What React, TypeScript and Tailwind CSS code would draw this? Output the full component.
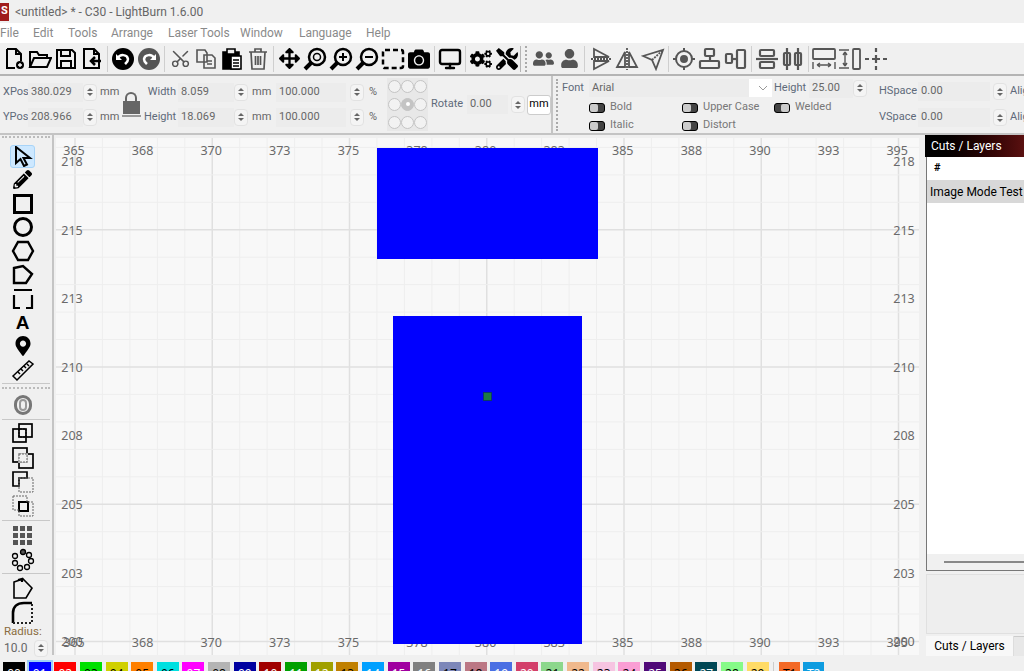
import { ReactNode } from 'react'
import { FaArrowsAlt, FaCamera, FaCogs, FaTools, FaUser, FaUserFriends, FaPencilAlt, FaMapMarkerAlt } from 'react-icons/fa'
import { Scissors, Monitor } from 'lucide-react'

const S = ({ children, size = 24, className = '' }: { children: ReactNode; size?: number; className?: string }) => (
  <svg width={size} height={size} viewBox="0 0 24 24" fill="none" stroke="currentColor" strokeWidth="2" className={className}>
    {children}
  </svg>
)

const Cell = ({ children, dim }: { children: ReactNode; dim?: boolean }) => (
  <div className={`flex h-[26px] w-[26px] flex-shrink-0 items-center justify-center ${dim ? 'text-[#555]' : 'text-black'}`}>
    {children}
  </div>
)

const Sep = () => (
  <div className="flex h-[26px] w-[5px] flex-shrink-0 justify-center">
    <div className="w-px bg-[#cfcfcf]" />
  </div>
)

const Spin = () => (
  <div className="flex h-[17px] w-[14px] flex-shrink-0 flex-col items-center justify-center gap-[2px] rounded-sm border border-[#e2e2e2] bg-[#f4f4f4]">
    <div className="h-0 w-0 border-x-[3px] border-b-[3px] border-x-transparent border-b-[#666]" />
    <div className="h-0 w-0 border-x-[3px] border-t-[3px] border-x-transparent border-t-[#666]" />
  </div>
)

const Field = ({ w, value, pad = 'pl-[3px]' }: { w: string; value: string; pad?: string }) => (
  <div className={`flex h-[19px] flex-shrink-0 items-center bg-[#ececec] text-[11px] tracking-[0.1px] text-[#666] ${w} ${pad}`}>{value}</div>
)

const Toggle = ({ on }: { on?: boolean }) => (
  <div className="flex h-[10px] w-[16px] flex-shrink-0 rounded-[3px] border border-black bg-[#444]">
    <div className={`h-full w-[8px] rounded-[2px] bg-[#ccc] ${on ? 'ml-auto' : ''}`} />
  </div>
)

const Dots = ({ h }: { h: string }) => (
  <div className={`w-0 flex-shrink-0 border-l-2 border-dotted border-[#aaa] ${h}`} />
)

const HDots = () => <div className="mx-[2px] h-0 flex-shrink-0 border-t-2 border-dotted border-[#bbb]" />

const HRule = () => <div className="mx-[2px] h-px flex-shrink-0 bg-[#c8c8c8]" />

const Side = ({ children }: { children: ReactNode }) => (
  <div className="flex h-[24px] flex-shrink-0 items-center justify-center text-black">{children}</div>
)

const Tool = ({ children }: { children: ReactNode }) => (
  <div className="flex h-[23.75px] flex-shrink-0 items-center justify-center text-black">{children}</div>
)

const colors = [
  ['00', '#000000', '#fff'], ['01', '#0000ff', '#fff'], ['02', '#ff0000', '#fff'], ['03', '#00e000', '#000'],
  ['04', '#d0d000', '#000'], ['05', '#ff8000', '#000'], ['06', '#00e0e0', '#000'], ['07', '#ff00ff', '#fff'],
  ['08', '#b4b4b4', '#000'], ['09', '#0000a0', '#fff'], ['10', '#a00000', '#fff'], ['11', '#00a000', '#fff'],
  ['12', '#a0a000', '#fff'], ['13', '#c08000', '#000'], ['14', '#00a0ff', '#fff'], ['15', '#a000a0', '#fff'],
  ['16', '#808080', '#fff'], ['17', '#7d87b9', '#000'], ['18', '#bb7784', '#000'], ['19', '#4a6fe3', '#fff'],
  ['20', '#d33f6a', '#fff'], ['21', '#8cd78c', '#000'], ['22', '#f0b98d', '#000'], ['23', '#f6c4e1', '#000'],
  ['24', '#fa9ed4', '#000'], ['25', '#500a78', '#fff'], ['26', '#b45a00', '#000'], ['27', '#004754', '#fff'],
  ['28', '#86fa88', '#000'], ['29', '#ffdb66', '#000'],
]

const xLabels = [365, 368, 370, 373, 375, 378, 380, 383, 385, 388, 390, 393, 395]
const yLabels = [218, 215, 213, 210, 208, 205, 203, 200]

function Canvas() {
  // canvas box starts at 56,138 on the page
  const vMinor = Array.from({ length: 32 }, (_, i) => 75 - 56 + i * 27.45)
  const hMinor = Array.from({ length: 20 }, (_, i) => 367 - 138 - 9 * 27.45 + i * 27.45)
  return (
    <div className="relative h-[517px] w-[863px] flex-shrink-0 overflow-hidden bg-[#f8f8f8] font-['Noto_Sans',sans-serif] text-[12.5px] text-[#6a6a6a]">
      <svg width="863" height="517" className="absolute left-0 top-0">
        {vMinor.map((x, i) => (
          <line key={i} x1={x} x2={x} y1="0" y2="517" stroke={i % 5 === 0 ? '#e0e0e0' : '#eeeeee'} strokeWidth={i % 5 === 0 ? 1.5 : 1} />
        ))}
        {hMinor.map((y, i) => (
          <line key={i} y1={y} y2={y} x1="0" x2="863" stroke={(i + 1) % 5 === 0 ? '#e0e0e0' : '#eeeeee'} strokeWidth={(i + 1) % 5 === 0 ? 1.5 : 1} />
        ))}
      </svg>
      {xLabels.map((n, i) => (
        <span key={n} className="absolute top-[4px] w-8 text-center" style={{ left: 2 + i * 68.6 }}>{n}</span>
      ))}
      {xLabels.map((n, i) => (
        <span key={n} className="absolute top-[496px] w-8 text-center" style={{ left: 2 + i * 68.6 }}>{n}</span>
      ))}
      {yLabels.map((n, i) => (
        <span key={n} className="absolute w-8 text-center" style={{ left: 0, top: 15 + i * 68.6 }}>{n}</span>
      ))}
      {yLabels.map((n, i) => (
        <span key={n} className="absolute w-8 text-center" style={{ left: 832, top: 15 + i * 68.6 }}>{n}</span>
      ))}
      <div className="absolute left-[321px] top-[10px] h-[111px] w-[221px] bg-[#0000ff]" />
      <div className="absolute left-[337px] top-[178px] h-[328px] w-[189px] bg-[#0000ff]" />
      <div className="absolute left-[427px] top-[254px] h-[9px] w-[9px] border border-[#0a3a6a] bg-[#1d7a45]" />
    </div>
  )
}

export default function App() {
  return (
    <div className="flex h-[671px] w-[1024px] flex-col overflow-hidden bg-[#f0f0f0] font-['Roboto','Noto_Sans',sans-serif] text-[11px]">
      {/* title */}
      <div className="flex h-[23px] flex-shrink-0 items-center text-[12px] text-[#666]">
        <div className="mr-[6px] flex h-[18px] w-[9px] items-center justify-center bg-[#a01c1c] text-[11px] font-bold text-white">S</div>
        <span>&lt;untitled&gt; * - C30 - LightBurn 1.6.00</span>
      </div>
      {/* menu */}
      <div className="flex h-[20px] flex-shrink-0 items-center bg-white text-[12px] text-[#8a8a8a]">
        <span className="w-[33px]">File</span>
        <span className="w-[35px]">Edit</span>
        <span className="w-[43px]">Tools</span>
        <span className="w-[57px]">Arrange</span>
        <span className="w-[72px]">Laser Tools</span>
        <span className="w-[59px]">Window</span>
        <span className="w-[67px]">Language</span>
        <span>Help</span>
      </div>
      {/* toolbar */}
      <div className="flex h-[33px] flex-shrink-0 items-center border-b-2 border-[#b4b4b4] pl-px">
        <Cell><S><path d="M5 2h9l5 5v7M5 2v19h8M14 2v5h5" /><circle cx="18" cy="18" r="4" fill="#000" stroke="none" /><path d="M16 18h4M18 16v4" stroke="#fff" strokeWidth="1.3" /></S></Cell>
        <Cell><S><path d="M2 20V5h7l2 3h8v3" /><path d="M2 20l4-9h17l-4 9z" /></S></Cell>
        <Cell><S><path d="M3 3h15l3 3v15H3z" /><path d="M7 3v6h9V3M7 21v-7h10v7" /></S></Cell>
        <Cell><S><path d="M4 2h10l5 5v14H4zM14 2v5h5" /><path d="M21 14h-9M15 10l-4 4 4 4" strokeWidth="2.5" /></S></Cell>
        <Sep />
        <Cell><S><circle cx="12" cy="12" r="11" fill="#000" stroke="none" /><path d="M7 11c2-4 9-4 10 1 0 3-2 4-3 5" stroke="#fff" strokeWidth="2.5" /><path d="M5 7v6h6z" fill="#fff" stroke="none" /></S></Cell>
        <Cell dim><S><circle cx="12" cy="12" r="11" fill="#555" stroke="none" /><path d="M17 11c-2-4-9-4-10 1 0 3 2 4 3 5" stroke="#fff" strokeWidth="2.5" /><path d="M19 7v6h-6z" fill="#fff" stroke="none" /></S></Cell>
        <Sep />
        <Cell dim><Scissors size={21} strokeWidth={1.7} className="-rotate-90" /></Cell>
        <Cell dim><S className="[stroke-width:1.6]"><path d="M3 3h8l2 3v9H3zM10 8h8l3 3v10H10z" fill="#f0f0f0" /><path d="M13 14h5M13 17h5" /></S></Cell>
        <Cell><S className="[stroke-width:1.6]"><path d="M3 5h16v17H3z" fill="#000" /><path d="M7 2h8v5H7z" fill="#f0f0f0" /><path d="M11 9h10v13H11z" fill="#fff" /><path d="M13 13h6M13 16h6M13 19h6" /></S></Cell>
        <Cell dim><S className="[stroke-width:1.7]"><path d="M3 5h18M9 5V2h6v3M5 5l1 17h12l1-17M9.5 9v9M12 9v9M14.500 9v9" /></S></Cell>
        <Sep />
        <Cell><FaArrowsAlt size={21} /></Cell>
        <Cell><S><circle cx="14" cy="10" r="8" strokeWidth="2.5" /><path d="M8 16l-6 6" strokeWidth="4" /><circle cx="14" cy="10" r="3.500" strokeWidth="1.500" /></S></Cell>
        <Cell><S><circle cx="14" cy="10" r="8" strokeWidth="2.5" /><path d="M8 16l-6 6" strokeWidth="4" /><path d="M10 10h8M14 6v8" /></S></Cell>
        <Cell><S><circle cx="14" cy="10" r="8" strokeWidth="2.5" /><path d="M8 16l-6 6" strokeWidth="4" /><path d="M10 10h8" /></S></Cell>
        <Cell><S><rect x="2" y="3" width="20" height="18" rx="2" strokeWidth="2.5" strokeDasharray="5 3" /></S></Cell>
        <Cell><FaCamera size={22} /></Cell>
        <Sep />
        <Cell><Monitor size={24} strokeWidth={2.4} /></Cell>
        <Sep />
        <Cell><FaCogs size={22} /></Cell>
        <Cell><FaTools size={22} /></Cell>
        <div className="flex h-[26px] w-[10px] flex-shrink-0">
          <div className="w-px bg-[#b4b4b4]" />
          <div className="ml-1"><Dots h="h-[26px]" /></div>
        </div>
        <Cell dim><FaUserFriends size={21} /></Cell>
        <Cell dim><FaUser size={19} /></Cell>
        <Sep />
        <div className="w-px" />
        <Cell dim><S className="[stroke-width:1.8]"><path d="M5 2l15 8H5zM5 14h15L5 22z" /><path d="M2 12h20" strokeDasharray="2 1" /></S></Cell>
        <Cell dim><S className="[stroke-width:1.8]"><path d="M10 5v15H2zM14 5v15h8z" /><path d="M12 1v22" strokeDasharray="2 1" /></S></Cell>
        <Cell dim><S className="[stroke-width:1.8]"><path d="M2 9l20-6-7 19-4-9z" /><path d="M11 13L22 3" strokeDasharray="2 1" /></S></Cell>
        <Sep />
        <Cell dim><S><circle cx="12" cy="12" r="8" /><circle cx="12" cy="12" r="3" fill="currentColor" /><path d="M12 1v4M12 19v4M1 12h4M19 12h4" /></S></Cell>
        <Cell dim><S className="[stroke-width:2.2]"><rect x="7" y="2" width="9" height="7" rx="1" /><rect x="2" y="14" width="19" height="7" rx="1" /><path d="M12 9v5" /></S></Cell>
        <Cell dim><S className="[stroke-width:2.2]"><rect x="2" y="7" width="6" height="9" rx="1" /><rect x="13" y="3" width="8" height="18" rx="1" /><path d="M8 12h5" /></S></Cell>
        <Sep />
        <Cell dim><S className="[stroke-width:2.2]"><rect x="5" y="3" width="14" height="6" rx="1" /><rect x="5" y="15" width="14" height="6" rx="1" /><path d="M1 12h22" /></S></Cell>
        <Cell dim><S className="[stroke-width:2.2]"><rect x="3" y="6" width="6" height="12" rx="1" /><rect x="14" y="6" width="6" height="12" rx="1" /><path d="M6 1v22M17 1v22" /></S></Cell>
        <Sep />
        <Cell dim><S className="[stroke-width:1.8]"><rect x="1" y="2" width="22" height="10" rx="1" /><path d="M5 18h14M5 18l3-2M5 18l3 2M19 18l-3-2M19 18l-3 2M1 15v7M23 15v7" strokeWidth="1.4" /></S></Cell>
        <Cell dim><S className="[stroke-width:1.8]"><rect x="15" y="2" width="7" height="20" rx="1" /><path d="M7 5v14M7 5l-2 3M7 5l2 3M7 19l-2-3M7 19l2-3M1 3h10M1 21h10" strokeWidth="1.4" /></S></Cell>
        <Cell dim><S className="[stroke-width:2.2]"><path d="M1 12h4M8 12h8M19 12h4M12 1v4M12 8v8M12 19v4" /></S></Cell>
      </div>
      {/* property bar */}
      <div className="flex h-[59px] flex-shrink-0 items-stretch border-b-2 border-[#c4c4c4] text-[#5e6a7a]">
        <div className="flex w-[553px] flex-shrink-0 items-center border-r-2 border-[#c4c4c4]">
          <div className="ml-[3px] flex w-[114px] flex-shrink-0 flex-col gap-[6px]">
            <div className="flex items-center">
              <span className="w-[25px]">XPos</span>
              <Field w="w-[55px]" value="380.029" />
              <Spin />
              <span className="ml-[3px] text-[#666]">mm</span>
            </div>
            <div className="flex items-center">
              <span className="w-[25px]">YPos</span>
              <Field w="w-[55px]" value="208.966" />
              <Spin />
              <span className="ml-[3px] text-[#666]">mm</span>
            </div>
          </div>
          <div className="ml-[4px] flex w-[20px] flex-shrink-0 flex-col items-center">
            <div className="h-[9px] w-[12px] rounded-t-[6px] border-[2.5px] border-b-0 border-[#666]" />
            <div className="h-[13px] w-[17px] bg-[#666]" />
            <div className="mt-[1px] h-[2px] w-[19px] bg-[#999]" />
          </div>
          <div className="ml-[3px] flex flex-shrink-0 flex-col gap-[6px]">
            {[['Width', '8.059'], ['Height', '18.069']].map(([l, v]) => (
              <div key={l} className="flex items-center">
                <span className="w-[32px] text-right">{l}</span>
                <Field w="w-[56px] ml-[2px]" value={v} />
                <Spin />
                <span className="ml-[4px] w-[24px] text-[#666]">mm</span>
                <Field w="w-[70px]" value="100.000" />
                <div className="ml-[4px]"><Spin /></div>
                <span className="ml-[5px] w-[10px] text-[#666]">%</span>
              </div>
            ))}
          </div>
          <div className="ml-[8px] grid h-[53px] w-[41px] flex-shrink-0 grid-cols-3 place-items-center bg-[#e8e8e8] px-px">
            {[0, 1, 2, 3, 4, 5, 6, 7, 8].map(i => (
              <div key={i} className={`flex h-[13px] w-[13px] items-center justify-center rounded-full border border-[#c4c4c4] ${i === 4 ? 'bg-[#c4c4c4]' : 'bg-[#f2f2f2]'}`}>
                {i === 4 && <div className="h-[4px] w-[4px] rounded-full bg-white" />}
              </div>
            ))}
          </div>
          <span className="ml-[3px] w-[35px] flex-shrink-0">Rotate</span>
          <Field w="w-[41px] ml-px" value="0.00" />
          <div className="ml-[3px]"><Spin /></div>
          <div className="ml-[2px] flex h-[20px] w-[24px] flex-shrink-0 items-center justify-center rounded-[3px] border border-[#ccc] bg-white text-[11px] text-black">mm</div>
        </div>
        <div className="ml-[3px] flex flex-col justify-center py-[3px]"><Dots h="h-[52px]" /></div>
        <div className="ml-[4px] flex w-[317px] flex-shrink-0 flex-col">
          <div className="mt-[3px] flex h-[18px] items-center">
            <span className="w-[27px] flex-shrink-0">Font</span>
            <div className="flex h-[18px] w-[183px] flex-shrink-0 items-center justify-between bg-white pr-[4px]">
              <div className="flex h-full w-[160px] items-center bg-[#ececec] pl-[3px] text-[#666]">Arial</div>
              <svg width="10" height="6" viewBox="0 0 10 6" fill="none" stroke="#999"><path d="M1 1l4 4 4-4" /></svg>
            </div>
            <span className="ml-[2px] w-[35px] flex-shrink-0">Height</span>
            <Field w="w-[44px]" value="25.00" />
            <Spin />
          </div>
          <div className="mt-[2px] flex flex-col gap-[1px] text-[#777]">
            <div className="flex h-[17px] items-center">
              <div className="ml-[27px]"><Toggle /></div>
              <span className="ml-[5px] w-[72px]">Bold</span>
              <Toggle />
              <span className="ml-[5px] w-[71px]">Upper Case</span>
              <Toggle on />
              <span className="ml-[5px]">Welded</span>
            </div>
            <div className="flex h-[17px] items-center">
              <div className="ml-[27px]"><Toggle /></div>
              <span className="ml-[5px] w-[72px]">Italic</span>
              <Toggle />
              <span className="ml-[5px]">Distort</span>
            </div>
          </div>
        </div>
        <div className="flex flex-shrink-0 flex-col justify-center gap-[7px]">
          {[['HSpace', '0.00'], ['VSpace', '0.00']].map(([l, v]) => (
            <div key={l} className="flex items-center">
              <span className="w-[35px] flex-shrink-0 text-right">{l}</span>
              <Field w="w-[72px] ml-[4px]" value={v} />
              <div className="ml-[3px]"><Spin /></div>
              <span className="ml-[3px] flex-shrink-0">Align</span>
            </div>
          ))}
        </div>
      </div>
      {/* main */}
      <div className="flex h-[522px] flex-shrink-0 items-start">
        <div className="flex h-[520px] w-[54px] flex-shrink-0 flex-col border-r-2 border-[#c4c4c4] pt-[1px]">
          <HDots />
          <div className="mx-[10px] mt-[7px] flex h-[23px] w-[25px] flex-shrink-0 items-center justify-center rounded-[3px] border border-[#a8d4f8] bg-[#cde8ff] text-black">
            <svg width="20" height="21" viewBox="0 0 20 21" fill="none" stroke="currentColor" strokeWidth="2"><path d="M3 1v16l4.500-4 3.500 7 3-1.500-3.500-6.500H17z" /></svg>
          </div>
          <div className="flex flex-col pr-[7px]">
            <Tool><FaPencilAlt size={19} /></Tool>
            <Tool><div className="h-[20px] w-[20px] border-[3px] border-black" /></Tool>
            <Tool><div className="h-[20px] w-[20px] rounded-full border-[3px] border-black" /></Tool>
            <Tool><S><path d="M7 3h10l5 9-5 9H7l-5-9z" strokeWidth="2.4" /></S></Tool>
            <Tool><S><path d="M3 5l9-2 9 8-6 9H3z" strokeWidth="2.4" /></S></Tool>
            <Tool><S><path d="M3 3h18" /><path d="M3 8v13h6M21 8v13h-6" strokeWidth="2.2" /></S></Tool>
            <Tool><span className="font-['Liberation_Sans',sans-serif] text-[19px] font-bold leading-none">A</span></Tool>
            <Tool><FaMapMarkerAlt size={20} /></Tool>
            <Tool><S className="[stroke-width:1.5]"><path d="M2 18L18 3l4 3L6 22z" /><path d="M7 14l2 2M10 11l2 2M13 8l2 2M16 6l2 2" /></S></Tool>
          </div>
          <div className="mt-px"><HRule /></div>
          <div className="mt-[3px]"><HDots /></div>
          <div className="flex flex-col pr-[7px] pt-[4px]">
            <Side><div className="flex h-[20px] w-[18px] items-center justify-center rounded-[9px] border-[3px] border-[#777]"><div className="h-[12px] w-[8px] rounded-[4px] border-2 border-[#999]" /></div></Side>
          </div>
          <div className="mt-[2px]"><HRule /></div>
          <div className="flex flex-col pr-[7px] pt-[2px] text-[#444]">
            <Side><S className="[stroke-width:1.7]"><rect x="2" y="7" width="13" height="13" /><rect x="8" y="2" width="13" height="13" /><path d="M8 7v8h7V7z" strokeDasharray="2 1" strokeWidth="1" /></S></Side>
            <Side><S className="[stroke-width:1.7]"><rect x="2" y="2" width="14" height="14" /><rect x="8" y="8" width="14" height="14" /><path d="M8 8h8v8H8z" stroke="#f0f0f0" fill="#f0f0f0" /><path d="M8 8h8v8H8z" strokeDasharray="2 1" strokeWidth="1" stroke="#666" /></S></Side>
            <Side><S className="[stroke-width:1.7]"><path d="M8 16H2V2h14v6H8z" /><path d="M8 8h14v14H8z" strokeDasharray="2 1" strokeWidth="1" stroke="#666" /></S></Side>
            <Side><S><rect x="8" y="8" width="9" height="9" /><path d="M2 2h14v6M2 2v14h6M17 8h5v14H8v-5" strokeDasharray="2 1" strokeWidth="1" stroke="#666" /></S></Side>
          </div>
          <div className="mt-[2px]"><HRule /></div>
          <div className="flex flex-col pr-[7px] pt-[3px]">
            <Side><div className="grid grid-cols-3 gap-[2px]">{[0, 1, 2, 3, 4, 5, 6, 7, 8].map(i => <div key={i} className="h-[5px] w-[5px] bg-[#555]" />)}</div></Side>
            <Side><S className="[stroke-width:1.3]"><circle cx="12" cy="4" r="2.500" fill="#555" /><circle cx="18" cy="7" r="2.500" /><circle cx="20" cy="13" r="2.500" /><circle cx="16" cy="19" r="2.500" /><circle cx="9" cy="20" r="2.500" /><circle cx="4" cy="15" r="2.500" /><circle cx="4" cy="8" r="2.500" /></S></Side>
          </div>
          <div className="mt-px"><HRule /></div>
          <div className="flex flex-col pr-[7px] pt-[3px] text-[#555]">
            <Side><S className="[stroke-width:1.6]"><path d="M3 5l9-3 9 9-6 10H3z" /><path d="M7 3l4-1 0 3" stroke="#000" strokeWidth="2.2" /></S></Side>
            <Side><S><path d="M2 22V12C2 6 6 2 13 2h8" stroke="#000" strokeWidth="2.6" /><path d="M2 22h19V3" strokeDasharray="2 2" stroke="#222" /></S></Side>
          </div>
          <div className="-mt-px pl-[4px] text-[11.5px] leading-[14px] text-[#8a6d40]">Radius:</div>
          <div className="mt-[1.5px] flex items-center pl-[4px] text-[12px] text-[#666]">
            <span className="w-[30px]">10.0</span>
            <Spin />
          </div>
        </div>
        <div className="ml-[2px] mt-[3px]"><Canvas /></div>
        <div className="ml-[6px] flex h-[521px] w-[99px] flex-shrink-0 flex-col overflow-hidden">
          <div className="flex h-[22px] flex-shrink-0 items-center whitespace-nowrap bg-gradient-to-r from-black to-[#5a1010] pl-[6px] text-[12px] text-white">
            Cuts / Layers
          </div>
          <div className="ml-px flex h-[414px] w-[110px] flex-shrink-0 flex-col border-b border-l border-[#777] bg-white text-[12px] text-black">
            <div className="flex h-[23px] flex-shrink-0 items-center pl-[7px] text-[11px] font-bold">#</div>
            <div className="flex h-[23px] flex-shrink-0 items-center whitespace-nowrap bg-[#d8d8d8] pl-[3px]">Image Mode Test Tile</div>
            <div className="flex-1" />
            <div className="flex h-[16px] flex-shrink-0 items-center bg-[#f0f0f0] pl-[17px]">
              <div className="h-[2px] w-full bg-[#888]" />
            </div>
          </div>
          <div className="ml-px mt-[3px] h-[60px] w-[110px] flex-shrink-0 border border-[#e0e0e0] bg-[#eeeeee]" />
          <div className="mt-[2px] flex flex-shrink-0">
            <div className="ml-px flex h-[20px] w-[88px] items-center justify-center border-r border-[#ddd] bg-[#f8f8f8] text-[12px] text-black">Cuts / Layers</div>
            <div className="flex-1 border-t border-[#ccc] bg-[#e8e8e8]" />
          </div>
        </div>
      </div>
      {/* palette */}
      <div className="flex min-h-0 flex-1 items-start overflow-hidden pl-[3px] pt-[5px] font-['Noto_Sans',sans-serif] text-[12px]">
        {colors.map(([n, bg, fg]) => (
          <div key={n} className={`mr-[3.65px] flex h-[24px] w-[22px] flex-shrink-0 items-center justify-center ${n === '01' ? 'outline outline-2 outline-[#9fd0f5]' : ''}`} style={{ backgroundColor: bg, color: fg }}>
            {n}
          </div>
        ))}
        <div className="ml-[1px] mr-[5px] h-[24px] w-px flex-shrink-0 bg-[#ccc]" />
        <div className="mr-[3px] flex h-[24px] w-[21px] flex-shrink-0 items-center justify-center bg-[#f36926] text-black">T1</div>
        <div className="flex h-[24px] w-[21px] flex-shrink-0 items-center justify-center bg-[#0e9ce0] text-white">T2</div>
      </div>
    </div>
  )
}
